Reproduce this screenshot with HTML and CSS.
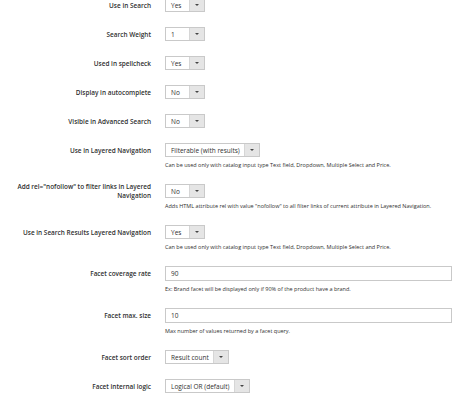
FILE: index.html
```html
<!DOCTYPE html>
<html lang="en">
<head>
  <meta charset="UTF-8" />
  <title>Attribute Storefront Properties</title>
  <link rel="stylesheet" href="styles.css">
</head>
<body>
  <div class="form">
    <div class="field">
      <label class="label">Use in Search</label>
      <div class="select short"><span class="value">Yes</span><span class="arrow"></span></div>
    </div>
    <div class="field">
      <label class="label">Search Weight</label>
      <div class="select short"><span class="value">1</span><span class="arrow"></span></div>
    </div>
    <div class="field">
      <label class="label">Used in spellcheck</label>
      <div class="select short"><span class="value">Yes</span><span class="arrow"></span></div>
    </div>
    <div class="field">
      <label class="label">Display in autocomplete</label>
      <div class="select short"><span class="value">No</span><span class="arrow"></span></div>
    </div>
    <div class="field">
      <label class="label">Visible in Advanced Search</label>
      <div class="select short"><span class="value">No</span><span class="arrow"></span></div>
    </div>
    <div class="field">
      <label class="label">Use in Layered Navigation</label>
      <div class="select"><span class="value">Filterable (with results)</span><span class="arrow"></span></div>
      <div class="note">Can be used only with catalog input type Text field, Dropdown, Multiple Select and Price.</div>
    </div>
    <div class="field">
      <label class="label">Add rel="nofollow" to filter links in Layered Navigation</label>
      <div class="select short"><span class="value">No</span><span class="arrow"></span></div>
      <div class="note">Adds HTML attribute rel with value "nofollow" to all filter links of current attribute in Layered Navigation.</div>
    </div>
    <div class="field">
      <label class="label">Use in Search Results Layered Navigation</label>
      <div class="select short"><span class="value">Yes</span><span class="arrow"></span></div>
      <div class="note">Can be used only with catalog input type Text field, Dropdown, Multiple Select and Price.</div>
    </div>
    <div class="field">
      <label class="label">Facet coverage rate</label>
      <input class="input" type="text" value="90">
      <div class="note">Ex: Brand facet will be displayed only if 90% of the product have a brand.</div>
    </div>
    <div class="field">
      <label class="label">Facet max. size</label>
      <input class="input" type="text" value="10">
      <div class="note">Max number of values returned by a facet query.</div>
    </div>
    <div class="field">
      <label class="label">Facet sort order</label>
      <div class="select"><span class="value">Result count</span><span class="arrow"></span></div>
    </div>
    <div class="field">
      <label class="label">Facet internal logic</label>
      <div class="select"><span class="value">Logical OR (default)</span><span class="arrow"></span></div>
    </div>
  </div>
</body>
</html>
```

FILE: styles.css
```css
body {
  margin: 0;
  background: #fff;
  font-family: 'Open Sans', sans-serif;
  color: #303030;
}
.form {
  margin-top: -2px;
  width: 452px;
}
/* one row: label on the left, control and note on the right */
.field {
  display: grid;
  grid-template-columns: 151px 1fr;
  column-gap: 14px;
  align-items: start;
  margin-bottom: 15px;
}
/* label keeps the control's height; long labels spill over the note row */
.label {
  height: 14px;
  display: flex;
  align-items: center;
  justify-content: flex-end;
  font-size: 6.45px;
  font-weight: 600;
  line-height: 9px;
  text-align: right;
}
.select {
  justify-self: start;
  display: inline-flex;
  height: 14px;
  box-sizing: border-box;
  border: 1px solid #c9c9c9;
  background: #fff;
  font-size: 6.5px;
}
.select .value {
  display: flex;
  align-items: center;
  padding: 0 4px 0 5px;
}
.select.short .value {
  min-width: 14px;
}
.select .arrow {
  width: 14px;
  background: #e5e5e5;
  border-left: 1px solid #d6d6d6;
  position: relative;
}
.select .arrow::after {
  content: '';
  position: absolute;
  left: 50%;
  top: 50%;
  margin: -1px 0 0 -2px;
  border-left: 2px solid transparent;
  border-right: 2px solid transparent;
  border-top: 2.5px solid #444;
}
.input {
  height: 15px;
  box-sizing: border-box;
  width: 100%;
  margin: 0;
  border: 1px solid #c9c9c9;
  padding: 0 5px;
  font-family: 'Open Sans', sans-serif;
  font-size: 6.5px;
  color: #303030;
}
.note {
  grid-column: 2;
  margin-top: 4px;
  font-size: 5.5px;
  line-height: 8px;
}
```
